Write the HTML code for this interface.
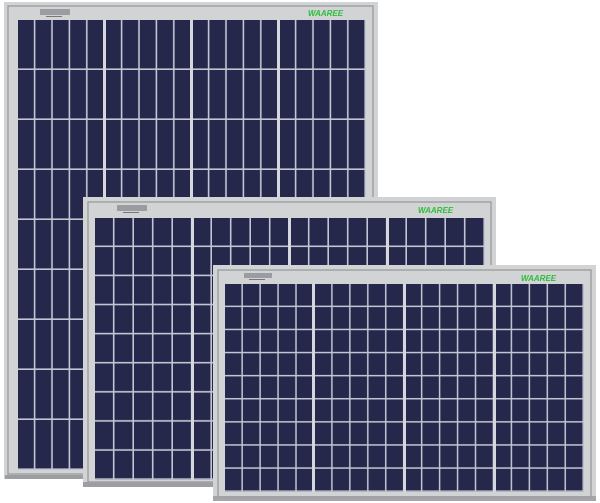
<!DOCTYPE html>
<html><head><meta charset="utf-8"><style>
html,body{margin:0;padding:0;background:#fff;width:600px;height:503px;overflow:hidden}
svg{display:block}
text{font-family:"Liberation Sans",sans-serif;font-weight:bold;font-style:italic}
</style></head><body>
<svg width="600" height="503" viewBox="0 0 600 503" xmlns="http://www.w3.org/2000/svg">
<defs>
<pattern id="pb" x="18" y="20" width="17.4" height="50" patternUnits="userSpaceOnUse">
<rect width="17.4" height="50" fill="#25284a"/>
<rect x="15.8" width="1.6" height="50" fill="#c3c5d2"/>
<rect y="48.4" width="17.4" height="1.6" fill="#c3c5d2"/>
</pattern>
<pattern id="pm" x="95" y="218" width="19.5" height="29.1" patternUnits="userSpaceOnUse">
<rect width="19.5" height="29.1" fill="#25284a"/>
<rect x="17.9" width="1.6" height="29.1" fill="#c3c5d2"/>
<rect y="27.5" width="19.5" height="1.6" fill="#c3c5d2"/>
</pattern>
<pattern id="pf" x="225" y="284" width="17.95" height="23.1" patternUnits="userSpaceOnUse">
<rect width="17.95" height="23.1" fill="#25284a"/>
<rect x="16.4" width="1.5" height="23.1" fill="#c3c5d2"/>
<rect y="21.6" width="17.95" height="1.5" fill="#c3c5d2"/>
</pattern>
</defs>

<!-- back panel -->
<rect x="4" y="2" width="374" height="477" fill="#d2d3d5"/>
<rect x="5" y="475" width="373" height="4" fill="#9c9ea1"/>
<rect x="8" y="6" width="365" height="468" fill="none" stroke="#9fa1a4" stroke-width="1.5"/>
<rect x="18" y="20" width="348" height="450" fill="url(#pb)"/>
<rect x="103" y="20" width="3" height="450" fill="#d6d7de"/>
<rect x="190" y="20" width="3" height="450" fill="#d6d7de"/>
<rect x="277" y="20" width="3" height="450" fill="#d6d7de"/>
<rect x="40" y="9" width="30" height="6" fill="#9a9ca2"/>
<rect x="46" y="16" width="16" height="1" fill="#777"/>
<text x="308" y="16" font-size="8" fill="#2bbf3a">WAAREE</text>

<!-- middle panel -->
<rect x="83" y="197" width="413" height="290" fill="#d2d3d5"/>
<rect x="83" y="482" width="413" height="5" fill="#9c9ea1"/>
<rect x="88" y="202" width="403" height="280" fill="none" stroke="#9fa1a4" stroke-width="1.5"/>
<rect x="95" y="218" width="390" height="262" fill="url(#pm)"/>
<rect x="191" y="218" width="3" height="262" fill="#d6d7de"/>
<rect x="288" y="218" width="3" height="262" fill="#d6d7de"/>
<rect x="386" y="218" width="3" height="262" fill="#d6d7de"/>
<rect x="117" y="205" width="30" height="6" fill="#9a9ca2"/>
<rect x="123" y="212" width="16" height="1" fill="#777"/>
<text x="418" y="213" font-size="8" fill="#2bbf3a">WAAREE</text>

<!-- front panel -->
<rect x="213" y="265" width="383" height="236" fill="#d2d3d5"/>
<rect x="213" y="496" width="383" height="5" fill="#a4a6a9"/>
<rect x="218" y="270" width="373" height="227" fill="none" stroke="#9fa1a4" stroke-width="1.5"/>
<rect x="225" y="284" width="359" height="208" fill="url(#pf)"/>
<rect x="312" y="284" width="3" height="208" fill="#d6d7de"/>
<rect x="403" y="284" width="3" height="208" fill="#d6d7de"/>
<rect x="493" y="284" width="3" height="208" fill="#d6d7de"/>
<rect x="244" y="273" width="28" height="5" fill="#9a9ca2"/>
<rect x="249" y="279" width="16" height="1" fill="#777"/>
<text x="521" y="281" font-size="8" fill="#2bbf3a">WAAREE</text>
</svg>
</body></html>
